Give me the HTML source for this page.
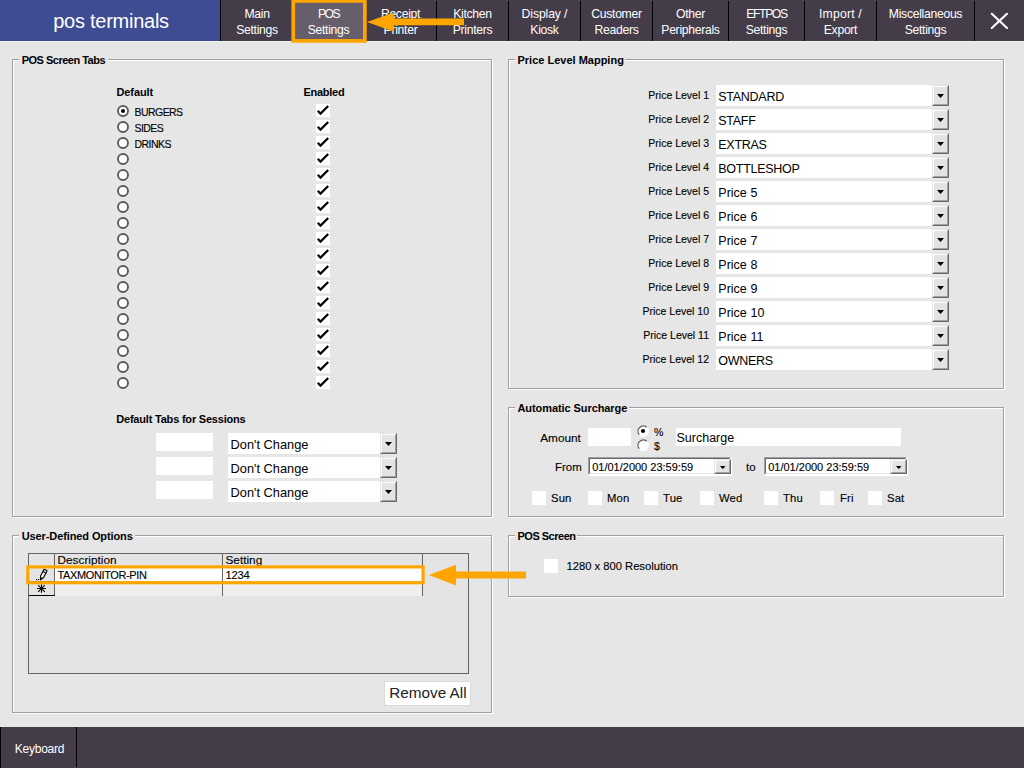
<!DOCTYPE html>
<html><head><meta charset="utf-8"><style>
html,body{margin:0;padding:0;}
body{width:1024px;height:768px;overflow:hidden;position:relative;background:#e6e6e6;font-family:"Liberation Sans", sans-serif;}
body div, body svg{position:absolute;box-sizing:content-box;}
.t{white-space:nowrap;}
.s{-webkit-text-stroke:0.12px currentColor;}
</style></head><body>
<div style="left:0px;top:0px;width:220px;height:41px;background:#3e4c94;"></div><div style="left:220px;top:0px;width:1px;height:41px;background:#000;"></div><div style="left:221px;top:0px;width:803px;height:41px;background:#443c48;"></div><div style="left:292px;top:0px;width:72px;height:41px;background:#675e6b;"></div><div style="left:292px;top:1px;width:1px;height:40px;background:#000;"></div><div style="left:364px;top:1px;width:1px;height:40px;background:#000;"></div><div style="left:436px;top:1px;width:1px;height:40px;background:#000;"></div><div style="left:508px;top:1px;width:1px;height:40px;background:#000;"></div><div style="left:580px;top:1px;width:1px;height:40px;background:#000;"></div><div style="left:652px;top:1px;width:1px;height:40px;background:#000;"></div><div style="left:728px;top:1px;width:1px;height:40px;background:#000;"></div><div style="left:804px;top:1px;width:1px;height:40px;background:#000;"></div><div style="left:876px;top:1px;width:1px;height:40px;background:#000;"></div><div style="left:974px;top:1px;width:1px;height:40px;background:#000;"></div><div style="left:0px;top:41px;width:1024px;height:1px;background:#f2f2f2;"></div><div class="t" style="left:11px;width:200px;text-align:center;top:10.97px;font-size:20px;line-height:20px;color:#fff;font-weight:400;letter-spacing:-0.25px">pos terminals</div><div class="t" style="left:157.0px;width:200px;text-align:center;top:7.97px;font-size:12.2px;line-height:12.2px;color:#fff;font-weight:400;letter-spacing:-0.3px">Main</div><div class="t" style="left:157.0px;width:200px;text-align:center;top:23.97px;font-size:12.2px;line-height:12.2px;color:#fff;font-weight:400;letter-spacing:-0.3px">Settings</div><div class="t" style="left:228.5px;width:200px;text-align:center;top:7.97px;font-size:12.2px;line-height:12.2px;color:#fff;font-weight:400;letter-spacing:-1.5px">POS</div><div class="t" style="left:228.5px;width:200px;text-align:center;top:23.97px;font-size:12.2px;line-height:12.2px;color:#fff;font-weight:400;letter-spacing:-0.3px">Settings</div><div class="t" style="left:300.5px;width:200px;text-align:center;top:7.97px;font-size:12.2px;line-height:12.2px;color:#fff;font-weight:400;letter-spacing:-0.3px">Receipt</div><div class="t" style="left:300.5px;width:200px;text-align:center;top:23.97px;font-size:12.2px;line-height:12.2px;color:#fff;font-weight:400;letter-spacing:-0.3px">Printer</div><div class="t" style="left:372.5px;width:200px;text-align:center;top:7.97px;font-size:12.2px;line-height:12.2px;color:#fff;font-weight:400;letter-spacing:-0.3px">Kitchen</div><div class="t" style="left:372.5px;width:200px;text-align:center;top:23.97px;font-size:12.2px;line-height:12.2px;color:#fff;font-weight:400;letter-spacing:-0.3px">Printers</div><div class="t" style="left:444.5px;width:200px;text-align:center;top:7.97px;font-size:12.2px;line-height:12.2px;color:#fff;font-weight:400;letter-spacing:-0.1px">Display /</div><div class="t" style="left:444.5px;width:200px;text-align:center;top:23.97px;font-size:12.2px;line-height:12.2px;color:#fff;font-weight:400;letter-spacing:-0.3px">Kiosk</div><div class="t" style="left:516.5px;width:200px;text-align:center;top:7.97px;font-size:12.2px;line-height:12.2px;color:#fff;font-weight:400;letter-spacing:-0.3px">Customer</div><div class="t" style="left:516.5px;width:200px;text-align:center;top:23.97px;font-size:12.2px;line-height:12.2px;color:#fff;font-weight:400;letter-spacing:-0.3px">Readers</div><div class="t" style="left:590.5px;width:200px;text-align:center;top:7.97px;font-size:12.2px;line-height:12.2px;color:#fff;font-weight:400;letter-spacing:-0.3px">Other</div><div class="t" style="left:590.5px;width:200px;text-align:center;top:23.97px;font-size:12.2px;line-height:12.2px;color:#fff;font-weight:400;letter-spacing:-0.3px">Peripherals</div><div class="t" style="left:666.5px;width:200px;text-align:center;top:7.97px;font-size:12.2px;line-height:12.2px;color:#fff;font-weight:400;letter-spacing:-1.4px">EFTPOS</div><div class="t" style="left:666.5px;width:200px;text-align:center;top:23.97px;font-size:12.2px;line-height:12.2px;color:#fff;font-weight:400;letter-spacing:-0.3px">Settings</div><div class="t" style="left:740.5px;width:200px;text-align:center;top:7.97px;font-size:12.2px;line-height:12.2px;color:#fff;font-weight:400;letter-spacing:0.2px">Import /</div><div class="t" style="left:740.5px;width:200px;text-align:center;top:23.97px;font-size:12.2px;line-height:12.2px;color:#fff;font-weight:400;letter-spacing:-0.3px">Export</div><div class="t" style="left:825.5px;width:200px;text-align:center;top:7.97px;font-size:12.2px;line-height:12.2px;color:#fff;font-weight:400;letter-spacing:-0.3px">Miscellaneous</div><div class="t" style="left:825.5px;width:200px;text-align:center;top:23.97px;font-size:12.2px;line-height:12.2px;color:#fff;font-weight:400;letter-spacing:-0.3px">Settings</div><svg style="left:989px;top:12px" width="20" height="18" viewBox="0 0 20 18"><path d="M2.8 1.8 L18 16 M18 1.8 L2.8 16" stroke="#fff" stroke-width="2.1" stroke-linecap="round"/></svg><div style="left:13px;top:60px;width:478px;height:456px;border:1px solid #fff"></div><div style="left:12px;top:59px;width:478px;height:456px;border:1px solid #a0a0a0"></div><div style="left:19.099999999999998px;top:53px;width:88.6px;height:12px;background:#e6e6e6;"></div><div class="t" style="left:21.7px;top:55.19px;font-size:11px;line-height:11px;color:#000;font-weight:700;letter-spacing:-0.5px">POS Screen Tabs</div><div class="t" style="left:116.5px;top:87.29px;font-size:11px;line-height:11px;color:#000;font-weight:700;letter-spacing:-0.1px">Default</div><div class="t" style="left:303.4px;top:87.49px;font-size:11px;line-height:11px;color:#000;font-weight:700;letter-spacing:-0.25px">Enabled</div><svg style="left:117px;top:105px" width="12" height="12" viewBox="0 0 12 12"><circle cx="6.0" cy="6.0" r="5.0" fill="#fff" stroke="#5c5c5c" stroke-width="1.9"/><circle cx="6.0" cy="6.0" r="2" fill="#000"/></svg><div class="t s" style="left:134.5px;top:107.01px;font-size:10.5px;line-height:10.5px;color:#000;font-weight:400;letter-spacing:-0.55px">BURGERS</div><div style="left:316px;top:104px;width:14px;height:13px;background:#fff;"></div><svg style="left:316px;top:104px" width="14" height="14" viewBox="0 0 14 14"><path d="M1.7 6.7 L4.5 9.6 L12.2 2.0" fill="none" stroke="#000" stroke-width="2.2" stroke-linecap="butt" stroke-linejoin="miter"/></svg><svg style="left:117px;top:121px" width="12" height="12" viewBox="0 0 12 12"><circle cx="6.0" cy="6.0" r="5.0" fill="#fff" stroke="#5c5c5c" stroke-width="1.9"/></svg><div class="t s" style="left:134.5px;top:123.01px;font-size:10.5px;line-height:10.5px;color:#000;font-weight:400;letter-spacing:-0.55px">SIDES</div><div style="left:316px;top:120px;width:14px;height:13px;background:#fff;"></div><svg style="left:316px;top:120px" width="14" height="14" viewBox="0 0 14 14"><path d="M1.7 6.7 L4.5 9.6 L12.2 2.0" fill="none" stroke="#000" stroke-width="2.2" stroke-linecap="butt" stroke-linejoin="miter"/></svg><svg style="left:117px;top:137px" width="12" height="12" viewBox="0 0 12 12"><circle cx="6.0" cy="6.0" r="5.0" fill="#fff" stroke="#5c5c5c" stroke-width="1.9"/></svg><div class="t s" style="left:134.5px;top:139.01px;font-size:10.5px;line-height:10.5px;color:#000;font-weight:400;letter-spacing:-0.55px">DRINKS</div><div style="left:316px;top:136px;width:14px;height:13px;background:#fff;"></div><svg style="left:316px;top:136px" width="14" height="14" viewBox="0 0 14 14"><path d="M1.7 6.7 L4.5 9.6 L12.2 2.0" fill="none" stroke="#000" stroke-width="2.2" stroke-linecap="butt" stroke-linejoin="miter"/></svg><svg style="left:117px;top:153px" width="12" height="12" viewBox="0 0 12 12"><circle cx="6.0" cy="6.0" r="5.0" fill="#fff" stroke="#5c5c5c" stroke-width="1.9"/></svg><div style="left:316px;top:152px;width:14px;height:13px;background:#fff;"></div><svg style="left:316px;top:152px" width="14" height="14" viewBox="0 0 14 14"><path d="M1.7 6.7 L4.5 9.6 L12.2 2.0" fill="none" stroke="#000" stroke-width="2.2" stroke-linecap="butt" stroke-linejoin="miter"/></svg><svg style="left:117px;top:169px" width="12" height="12" viewBox="0 0 12 12"><circle cx="6.0" cy="6.0" r="5.0" fill="#fff" stroke="#5c5c5c" stroke-width="1.9"/></svg><div style="left:316px;top:168px;width:14px;height:13px;background:#fff;"></div><svg style="left:316px;top:168px" width="14" height="14" viewBox="0 0 14 14"><path d="M1.7 6.7 L4.5 9.6 L12.2 2.0" fill="none" stroke="#000" stroke-width="2.2" stroke-linecap="butt" stroke-linejoin="miter"/></svg><svg style="left:117px;top:185px" width="12" height="12" viewBox="0 0 12 12"><circle cx="6.0" cy="6.0" r="5.0" fill="#fff" stroke="#5c5c5c" stroke-width="1.9"/></svg><div style="left:316px;top:184px;width:14px;height:13px;background:#fff;"></div><svg style="left:316px;top:184px" width="14" height="14" viewBox="0 0 14 14"><path d="M1.7 6.7 L4.5 9.6 L12.2 2.0" fill="none" stroke="#000" stroke-width="2.2" stroke-linecap="butt" stroke-linejoin="miter"/></svg><svg style="left:117px;top:201px" width="12" height="12" viewBox="0 0 12 12"><circle cx="6.0" cy="6.0" r="5.0" fill="#fff" stroke="#5c5c5c" stroke-width="1.9"/></svg><div style="left:316px;top:200px;width:14px;height:13px;background:#fff;"></div><svg style="left:316px;top:200px" width="14" height="14" viewBox="0 0 14 14"><path d="M1.7 6.7 L4.5 9.6 L12.2 2.0" fill="none" stroke="#000" stroke-width="2.2" stroke-linecap="butt" stroke-linejoin="miter"/></svg><svg style="left:117px;top:217px" width="12" height="12" viewBox="0 0 12 12"><circle cx="6.0" cy="6.0" r="5.0" fill="#fff" stroke="#5c5c5c" stroke-width="1.9"/></svg><div style="left:316px;top:216px;width:14px;height:13px;background:#fff;"></div><svg style="left:316px;top:216px" width="14" height="14" viewBox="0 0 14 14"><path d="M1.7 6.7 L4.5 9.6 L12.2 2.0" fill="none" stroke="#000" stroke-width="2.2" stroke-linecap="butt" stroke-linejoin="miter"/></svg><svg style="left:117px;top:233px" width="12" height="12" viewBox="0 0 12 12"><circle cx="6.0" cy="6.0" r="5.0" fill="#fff" stroke="#5c5c5c" stroke-width="1.9"/></svg><div style="left:316px;top:232px;width:14px;height:13px;background:#fff;"></div><svg style="left:316px;top:232px" width="14" height="14" viewBox="0 0 14 14"><path d="M1.7 6.7 L4.5 9.6 L12.2 2.0" fill="none" stroke="#000" stroke-width="2.2" stroke-linecap="butt" stroke-linejoin="miter"/></svg><svg style="left:117px;top:249px" width="12" height="12" viewBox="0 0 12 12"><circle cx="6.0" cy="6.0" r="5.0" fill="#fff" stroke="#5c5c5c" stroke-width="1.9"/></svg><div style="left:316px;top:248px;width:14px;height:13px;background:#fff;"></div><svg style="left:316px;top:248px" width="14" height="14" viewBox="0 0 14 14"><path d="M1.7 6.7 L4.5 9.6 L12.2 2.0" fill="none" stroke="#000" stroke-width="2.2" stroke-linecap="butt" stroke-linejoin="miter"/></svg><svg style="left:117px;top:265px" width="12" height="12" viewBox="0 0 12 12"><circle cx="6.0" cy="6.0" r="5.0" fill="#fff" stroke="#5c5c5c" stroke-width="1.9"/></svg><div style="left:316px;top:264px;width:14px;height:13px;background:#fff;"></div><svg style="left:316px;top:264px" width="14" height="14" viewBox="0 0 14 14"><path d="M1.7 6.7 L4.5 9.6 L12.2 2.0" fill="none" stroke="#000" stroke-width="2.2" stroke-linecap="butt" stroke-linejoin="miter"/></svg><svg style="left:117px;top:281px" width="12" height="12" viewBox="0 0 12 12"><circle cx="6.0" cy="6.0" r="5.0" fill="#fff" stroke="#5c5c5c" stroke-width="1.9"/></svg><div style="left:316px;top:280px;width:14px;height:13px;background:#fff;"></div><svg style="left:316px;top:280px" width="14" height="14" viewBox="0 0 14 14"><path d="M1.7 6.7 L4.5 9.6 L12.2 2.0" fill="none" stroke="#000" stroke-width="2.2" stroke-linecap="butt" stroke-linejoin="miter"/></svg><svg style="left:117px;top:297px" width="12" height="12" viewBox="0 0 12 12"><circle cx="6.0" cy="6.0" r="5.0" fill="#fff" stroke="#5c5c5c" stroke-width="1.9"/></svg><div style="left:316px;top:296px;width:14px;height:13px;background:#fff;"></div><svg style="left:316px;top:296px" width="14" height="14" viewBox="0 0 14 14"><path d="M1.7 6.7 L4.5 9.6 L12.2 2.0" fill="none" stroke="#000" stroke-width="2.2" stroke-linecap="butt" stroke-linejoin="miter"/></svg><svg style="left:117px;top:313px" width="12" height="12" viewBox="0 0 12 12"><circle cx="6.0" cy="6.0" r="5.0" fill="#fff" stroke="#5c5c5c" stroke-width="1.9"/></svg><div style="left:316px;top:312px;width:14px;height:13px;background:#fff;"></div><svg style="left:316px;top:312px" width="14" height="14" viewBox="0 0 14 14"><path d="M1.7 6.7 L4.5 9.6 L12.2 2.0" fill="none" stroke="#000" stroke-width="2.2" stroke-linecap="butt" stroke-linejoin="miter"/></svg><svg style="left:117px;top:329px" width="12" height="12" viewBox="0 0 12 12"><circle cx="6.0" cy="6.0" r="5.0" fill="#fff" stroke="#5c5c5c" stroke-width="1.9"/></svg><div style="left:316px;top:328px;width:14px;height:13px;background:#fff;"></div><svg style="left:316px;top:328px" width="14" height="14" viewBox="0 0 14 14"><path d="M1.7 6.7 L4.5 9.6 L12.2 2.0" fill="none" stroke="#000" stroke-width="2.2" stroke-linecap="butt" stroke-linejoin="miter"/></svg><svg style="left:117px;top:345px" width="12" height="12" viewBox="0 0 12 12"><circle cx="6.0" cy="6.0" r="5.0" fill="#fff" stroke="#5c5c5c" stroke-width="1.9"/></svg><div style="left:316px;top:344px;width:14px;height:13px;background:#fff;"></div><svg style="left:316px;top:344px" width="14" height="14" viewBox="0 0 14 14"><path d="M1.7 6.7 L4.5 9.6 L12.2 2.0" fill="none" stroke="#000" stroke-width="2.2" stroke-linecap="butt" stroke-linejoin="miter"/></svg><svg style="left:117px;top:361px" width="12" height="12" viewBox="0 0 12 12"><circle cx="6.0" cy="6.0" r="5.0" fill="#fff" stroke="#5c5c5c" stroke-width="1.9"/></svg><div style="left:316px;top:360px;width:14px;height:13px;background:#fff;"></div><svg style="left:316px;top:360px" width="14" height="14" viewBox="0 0 14 14"><path d="M1.7 6.7 L4.5 9.6 L12.2 2.0" fill="none" stroke="#000" stroke-width="2.2" stroke-linecap="butt" stroke-linejoin="miter"/></svg><svg style="left:117px;top:377px" width="12" height="12" viewBox="0 0 12 12"><circle cx="6.0" cy="6.0" r="5.0" fill="#fff" stroke="#5c5c5c" stroke-width="1.9"/></svg><div style="left:316px;top:376px;width:14px;height:13px;background:#fff;"></div><svg style="left:316px;top:376px" width="14" height="14" viewBox="0 0 14 14"><path d="M1.7 6.7 L4.5 9.6 L12.2 2.0" fill="none" stroke="#000" stroke-width="2.2" stroke-linecap="butt" stroke-linejoin="miter"/></svg><div class="t" style="left:116.25px;top:414.09px;font-size:11px;line-height:11px;color:#000;font-weight:700;letter-spacing:-0.2px">Default Tabs for Sessions</div><div style="left:156px;top:433px;width:57px;height:18px;background:#fff;"></div><div style="left:228px;top:433px;width:152px;height:21px;background:#fff;"></div><div style="left:380px;top:433px;width:15px;height:19px;background:#e3e3e3;border-left:1px solid #e3e3e3;border-top:1px solid #e3e3e3;border-right:1px solid #696969;border-bottom:1px solid #696969"></div><div style="left:381px;top:434px;width:13px;height:17px;border-left:1px solid #fff;border-top:1px solid #fff;border-right:1px solid #a0a0a0;border-bottom:1px solid #a0a0a0"></div><svg style="left:384.5px;top:441.5px" width="7" height="4" viewBox="0 0 7 4"><path d="M0 0 H7 L3.5 4 Z" fill="#000"/></svg><div class="t" style="left:230.6px;top:438.96px;font-size:12.8px;line-height:12.8px;color:#000;font-weight:400;letter-spacing:0px;word-spacing:0px">Don&#39;t Change</div><div style="left:156px;top:457px;width:57px;height:18px;background:#fff;"></div><div style="left:228px;top:457px;width:152px;height:21px;background:#fff;"></div><div style="left:380px;top:457px;width:15px;height:19px;background:#e3e3e3;border-left:1px solid #e3e3e3;border-top:1px solid #e3e3e3;border-right:1px solid #696969;border-bottom:1px solid #696969"></div><div style="left:381px;top:458px;width:13px;height:17px;border-left:1px solid #fff;border-top:1px solid #fff;border-right:1px solid #a0a0a0;border-bottom:1px solid #a0a0a0"></div><svg style="left:384.5px;top:465.5px" width="7" height="4" viewBox="0 0 7 4"><path d="M0 0 H7 L3.5 4 Z" fill="#000"/></svg><div class="t" style="left:230.6px;top:462.96px;font-size:12.8px;line-height:12.8px;color:#000;font-weight:400;letter-spacing:0px;word-spacing:0px">Don&#39;t Change</div><div style="left:156px;top:481px;width:57px;height:18px;background:#fff;"></div><div style="left:228px;top:481px;width:152px;height:21px;background:#fff;"></div><div style="left:380px;top:481px;width:15px;height:19px;background:#e3e3e3;border-left:1px solid #e3e3e3;border-top:1px solid #e3e3e3;border-right:1px solid #696969;border-bottom:1px solid #696969"></div><div style="left:381px;top:482px;width:13px;height:17px;border-left:1px solid #fff;border-top:1px solid #fff;border-right:1px solid #a0a0a0;border-bottom:1px solid #a0a0a0"></div><svg style="left:384.5px;top:489.5px" width="7" height="4" viewBox="0 0 7 4"><path d="M0 0 H7 L3.5 4 Z" fill="#000"/></svg><div class="t" style="left:230.6px;top:486.96px;font-size:12.8px;line-height:12.8px;color:#000;font-weight:400;letter-spacing:0px;word-spacing:0px">Don&#39;t Change</div><div style="left:509px;top:60px;width:494px;height:328px;border:1px solid #fff"></div><div style="left:508px;top:59px;width:494px;height:328px;border:1px solid #a0a0a0"></div><div style="left:514.9px;top:53px;width:110.6px;height:12px;background:#e6e6e6;"></div><div class="t" style="left:517.5px;top:55.19px;font-size:11px;line-height:11px;color:#000;font-weight:700;letter-spacing:0px">Price Level Mapping</div><div class="t s" style="right:315px;top:90.21px;font-size:10.5px;line-height:10.5px;color:#000;font-weight:400;text-align:right;letter-spacing:0px">Price Level 1</div><div style="left:716px;top:85px;width:216px;height:21px;background:#fff;"></div><div style="left:932px;top:85px;width:15px;height:19px;background:#e3e3e3;border-left:1px solid #e3e3e3;border-top:1px solid #e3e3e3;border-right:1px solid #696969;border-bottom:1px solid #696969"></div><div style="left:933px;top:86px;width:13px;height:17px;border-left:1px solid #fff;border-top:1px solid #fff;border-right:1px solid #a0a0a0;border-bottom:1px solid #a0a0a0"></div><svg style="left:936.5px;top:93.5px" width="7" height="4" viewBox="0 0 7 4"><path d="M0 0 H7 L3.5 4 Z" fill="#000"/></svg><div class="t" style="left:718.3px;top:91.02px;font-size:12.5px;line-height:12.5px;color:#000;font-weight:400;letter-spacing:-0.28px;word-spacing:0px">STANDARD</div><div class="t s" style="right:315px;top:114.21px;font-size:10.5px;line-height:10.5px;color:#000;font-weight:400;text-align:right;letter-spacing:0px">Price Level 2</div><div style="left:716px;top:109px;width:216px;height:21px;background:#fff;"></div><div style="left:932px;top:109px;width:15px;height:19px;background:#e3e3e3;border-left:1px solid #e3e3e3;border-top:1px solid #e3e3e3;border-right:1px solid #696969;border-bottom:1px solid #696969"></div><div style="left:933px;top:110px;width:13px;height:17px;border-left:1px solid #fff;border-top:1px solid #fff;border-right:1px solid #a0a0a0;border-bottom:1px solid #a0a0a0"></div><svg style="left:936.5px;top:117.5px" width="7" height="4" viewBox="0 0 7 4"><path d="M0 0 H7 L3.5 4 Z" fill="#000"/></svg><div class="t" style="left:718.3px;top:115.02px;font-size:12.5px;line-height:12.5px;color:#000;font-weight:400;letter-spacing:-0.28px;word-spacing:0px">STAFF</div><div class="t s" style="right:315px;top:138.21px;font-size:10.5px;line-height:10.5px;color:#000;font-weight:400;text-align:right;letter-spacing:0px">Price Level 3</div><div style="left:716px;top:133px;width:216px;height:21px;background:#fff;"></div><div style="left:932px;top:133px;width:15px;height:19px;background:#e3e3e3;border-left:1px solid #e3e3e3;border-top:1px solid #e3e3e3;border-right:1px solid #696969;border-bottom:1px solid #696969"></div><div style="left:933px;top:134px;width:13px;height:17px;border-left:1px solid #fff;border-top:1px solid #fff;border-right:1px solid #a0a0a0;border-bottom:1px solid #a0a0a0"></div><svg style="left:936.5px;top:141.5px" width="7" height="4" viewBox="0 0 7 4"><path d="M0 0 H7 L3.5 4 Z" fill="#000"/></svg><div class="t" style="left:718.3px;top:139.02px;font-size:12.5px;line-height:12.5px;color:#000;font-weight:400;letter-spacing:-0.28px;word-spacing:0px">EXTRAS</div><div class="t s" style="right:315px;top:162.21px;font-size:10.5px;line-height:10.5px;color:#000;font-weight:400;text-align:right;letter-spacing:0px">Price Level 4</div><div style="left:716px;top:157px;width:216px;height:21px;background:#fff;"></div><div style="left:932px;top:157px;width:15px;height:19px;background:#e3e3e3;border-left:1px solid #e3e3e3;border-top:1px solid #e3e3e3;border-right:1px solid #696969;border-bottom:1px solid #696969"></div><div style="left:933px;top:158px;width:13px;height:17px;border-left:1px solid #fff;border-top:1px solid #fff;border-right:1px solid #a0a0a0;border-bottom:1px solid #a0a0a0"></div><svg style="left:936.5px;top:165.5px" width="7" height="4" viewBox="0 0 7 4"><path d="M0 0 H7 L3.5 4 Z" fill="#000"/></svg><div class="t" style="left:718.3px;top:163.02px;font-size:12.5px;line-height:12.5px;color:#000;font-weight:400;letter-spacing:-0.28px;word-spacing:0px">BOTTLESHOP</div><div class="t s" style="right:315px;top:186.21px;font-size:10.5px;line-height:10.5px;color:#000;font-weight:400;text-align:right;letter-spacing:0px">Price Level 5</div><div style="left:716px;top:181px;width:216px;height:21px;background:#fff;"></div><div style="left:932px;top:181px;width:15px;height:19px;background:#e3e3e3;border-left:1px solid #e3e3e3;border-top:1px solid #e3e3e3;border-right:1px solid #696969;border-bottom:1px solid #696969"></div><div style="left:933px;top:182px;width:13px;height:17px;border-left:1px solid #fff;border-top:1px solid #fff;border-right:1px solid #a0a0a0;border-bottom:1px solid #a0a0a0"></div><svg style="left:936.5px;top:189.5px" width="7" height="4" viewBox="0 0 7 4"><path d="M0 0 H7 L3.5 4 Z" fill="#000"/></svg><div class="t" style="left:718.3px;top:187.02px;font-size:12.5px;line-height:12.5px;color:#000;font-weight:400;letter-spacing:0px;word-spacing:0.2px">Price 5</div><div class="t s" style="right:315px;top:210.21px;font-size:10.5px;line-height:10.5px;color:#000;font-weight:400;text-align:right;letter-spacing:0px">Price Level 6</div><div style="left:716px;top:205px;width:216px;height:21px;background:#fff;"></div><div style="left:932px;top:205px;width:15px;height:19px;background:#e3e3e3;border-left:1px solid #e3e3e3;border-top:1px solid #e3e3e3;border-right:1px solid #696969;border-bottom:1px solid #696969"></div><div style="left:933px;top:206px;width:13px;height:17px;border-left:1px solid #fff;border-top:1px solid #fff;border-right:1px solid #a0a0a0;border-bottom:1px solid #a0a0a0"></div><svg style="left:936.5px;top:213.5px" width="7" height="4" viewBox="0 0 7 4"><path d="M0 0 H7 L3.5 4 Z" fill="#000"/></svg><div class="t" style="left:718.3px;top:211.02px;font-size:12.5px;line-height:12.5px;color:#000;font-weight:400;letter-spacing:0px;word-spacing:0.2px">Price 6</div><div class="t s" style="right:315px;top:234.21px;font-size:10.5px;line-height:10.5px;color:#000;font-weight:400;text-align:right;letter-spacing:0px">Price Level 7</div><div style="left:716px;top:229px;width:216px;height:21px;background:#fff;"></div><div style="left:932px;top:229px;width:15px;height:19px;background:#e3e3e3;border-left:1px solid #e3e3e3;border-top:1px solid #e3e3e3;border-right:1px solid #696969;border-bottom:1px solid #696969"></div><div style="left:933px;top:230px;width:13px;height:17px;border-left:1px solid #fff;border-top:1px solid #fff;border-right:1px solid #a0a0a0;border-bottom:1px solid #a0a0a0"></div><svg style="left:936.5px;top:237.5px" width="7" height="4" viewBox="0 0 7 4"><path d="M0 0 H7 L3.5 4 Z" fill="#000"/></svg><div class="t" style="left:718.3px;top:235.02px;font-size:12.5px;line-height:12.5px;color:#000;font-weight:400;letter-spacing:0px;word-spacing:0.2px">Price 7</div><div class="t s" style="right:315px;top:258.21px;font-size:10.5px;line-height:10.5px;color:#000;font-weight:400;text-align:right;letter-spacing:0px">Price Level 8</div><div style="left:716px;top:253px;width:216px;height:21px;background:#fff;"></div><div style="left:932px;top:253px;width:15px;height:19px;background:#e3e3e3;border-left:1px solid #e3e3e3;border-top:1px solid #e3e3e3;border-right:1px solid #696969;border-bottom:1px solid #696969"></div><div style="left:933px;top:254px;width:13px;height:17px;border-left:1px solid #fff;border-top:1px solid #fff;border-right:1px solid #a0a0a0;border-bottom:1px solid #a0a0a0"></div><svg style="left:936.5px;top:261.5px" width="7" height="4" viewBox="0 0 7 4"><path d="M0 0 H7 L3.5 4 Z" fill="#000"/></svg><div class="t" style="left:718.3px;top:259.02px;font-size:12.5px;line-height:12.5px;color:#000;font-weight:400;letter-spacing:0px;word-spacing:0.2px">Price 8</div><div class="t s" style="right:315px;top:282.21px;font-size:10.5px;line-height:10.5px;color:#000;font-weight:400;text-align:right;letter-spacing:0px">Price Level 9</div><div style="left:716px;top:277px;width:216px;height:21px;background:#fff;"></div><div style="left:932px;top:277px;width:15px;height:19px;background:#e3e3e3;border-left:1px solid #e3e3e3;border-top:1px solid #e3e3e3;border-right:1px solid #696969;border-bottom:1px solid #696969"></div><div style="left:933px;top:278px;width:13px;height:17px;border-left:1px solid #fff;border-top:1px solid #fff;border-right:1px solid #a0a0a0;border-bottom:1px solid #a0a0a0"></div><svg style="left:936.5px;top:285.5px" width="7" height="4" viewBox="0 0 7 4"><path d="M0 0 H7 L3.5 4 Z" fill="#000"/></svg><div class="t" style="left:718.3px;top:283.02px;font-size:12.5px;line-height:12.5px;color:#000;font-weight:400;letter-spacing:0px;word-spacing:0.2px">Price 9</div><div class="t s" style="right:315px;top:306.21px;font-size:10.5px;line-height:10.5px;color:#000;font-weight:400;text-align:right;letter-spacing:0px">Price Level 10</div><div style="left:716px;top:301px;width:216px;height:21px;background:#fff;"></div><div style="left:932px;top:301px;width:15px;height:19px;background:#e3e3e3;border-left:1px solid #e3e3e3;border-top:1px solid #e3e3e3;border-right:1px solid #696969;border-bottom:1px solid #696969"></div><div style="left:933px;top:302px;width:13px;height:17px;border-left:1px solid #fff;border-top:1px solid #fff;border-right:1px solid #a0a0a0;border-bottom:1px solid #a0a0a0"></div><svg style="left:936.5px;top:309.5px" width="7" height="4" viewBox="0 0 7 4"><path d="M0 0 H7 L3.5 4 Z" fill="#000"/></svg><div class="t" style="left:718.3px;top:307.02px;font-size:12.5px;line-height:12.5px;color:#000;font-weight:400;letter-spacing:0px;word-spacing:0.2px">Price 10</div><div class="t s" style="right:315px;top:330.21px;font-size:10.5px;line-height:10.5px;color:#000;font-weight:400;text-align:right;letter-spacing:0px">Price Level 11</div><div style="left:716px;top:325px;width:216px;height:21px;background:#fff;"></div><div style="left:932px;top:325px;width:15px;height:19px;background:#e3e3e3;border-left:1px solid #e3e3e3;border-top:1px solid #e3e3e3;border-right:1px solid #696969;border-bottom:1px solid #696969"></div><div style="left:933px;top:326px;width:13px;height:17px;border-left:1px solid #fff;border-top:1px solid #fff;border-right:1px solid #a0a0a0;border-bottom:1px solid #a0a0a0"></div><svg style="left:936.5px;top:333.5px" width="7" height="4" viewBox="0 0 7 4"><path d="M0 0 H7 L3.5 4 Z" fill="#000"/></svg><div class="t" style="left:718.3px;top:331.02px;font-size:12.5px;line-height:12.5px;color:#000;font-weight:400;letter-spacing:0px;word-spacing:0.2px">Price 11</div><div class="t s" style="right:315px;top:354.21px;font-size:10.5px;line-height:10.5px;color:#000;font-weight:400;text-align:right;letter-spacing:0px">Price Level 12</div><div style="left:716px;top:349px;width:216px;height:21px;background:#fff;"></div><div style="left:932px;top:349px;width:15px;height:19px;background:#e3e3e3;border-left:1px solid #e3e3e3;border-top:1px solid #e3e3e3;border-right:1px solid #696969;border-bottom:1px solid #696969"></div><div style="left:933px;top:350px;width:13px;height:17px;border-left:1px solid #fff;border-top:1px solid #fff;border-right:1px solid #a0a0a0;border-bottom:1px solid #a0a0a0"></div><svg style="left:936.5px;top:357.5px" width="7" height="4" viewBox="0 0 7 4"><path d="M0 0 H7 L3.5 4 Z" fill="#000"/></svg><div class="t" style="left:718.3px;top:355.02px;font-size:12.5px;line-height:12.5px;color:#000;font-weight:400;letter-spacing:-0.28px;word-spacing:0px">OWNERS</div><div style="left:509px;top:408px;width:494px;height:108px;border:1px solid #fff"></div><div style="left:508px;top:407px;width:494px;height:108px;border:1px solid #a0a0a0"></div><div style="left:514.9px;top:401px;width:114.19999999999999px;height:12px;background:#e6e6e6;"></div><div class="t" style="left:517.5px;top:403.19px;font-size:11px;line-height:11px;color:#000;font-weight:700;letter-spacing:-0.08px">Automatic Surcharge</div><div class="t s" style="left:540.2px;top:432.81px;font-size:11.8px;line-height:11.8px;color:#000;font-weight:400;letter-spacing:0px">Amount</div><div style="left:588px;top:428px;width:43px;height:18px;background:#fff;"></div><svg style="left:637px;top:425px" width="12" height="12" viewBox="0 0 12 12"><circle cx="6" cy="6" r="5.4" fill="#fff" stroke="#fff" stroke-width="1.2"/><path d="M2.2 9.8 A5.4 5.4 0 0 1 9.8 2.2" fill="none" stroke="#666" stroke-width="1.4"/><circle cx="6" cy="6" r="2.1" fill="#000"/></svg><svg style="left:637px;top:439px" width="12" height="12" viewBox="0 0 12 12"><circle cx="6" cy="6" r="5.4" fill="#fff" stroke="#fff" stroke-width="1.2"/><path d="M2.2 9.8 A5.4 5.4 0 0 1 9.8 2.2" fill="none" stroke="#666" stroke-width="1.4"/></svg><div class="t s" style="left:654px;top:426.71px;font-size:10.5px;line-height:10.5px;color:#000;font-weight:400;">%</div><div class="t s" style="left:654px;top:440.71px;font-size:10.5px;line-height:10.5px;color:#000;font-weight:400;">$</div><div style="left:676px;top:428px;width:225px;height:18px;background:#fff;"></div><div class="t" style="left:676.5px;top:432.32px;font-size:12.5px;line-height:12.5px;color:#000;font-weight:400;letter-spacing:0px">Surcharge</div><div class="t s" style="left:555px;top:462.07px;font-size:11.5px;line-height:11.5px;color:#000;font-weight:400;letter-spacing:0px">From</div><div class="t s" style="left:746px;top:462.07px;font-size:11.5px;line-height:11.5px;color:#000;font-weight:400;">to</div><div style="left:588px;top:457px;width:144px;height:19px;background:#fff;"></div><div style="left:588px;top:457px;width:143px;height:18px;border-left:1px solid #a0a0a0;border-top:1px solid #a0a0a0;border-right:1px solid #fff;border-bottom:1px solid #fff;box-sizing:border-box"></div><div style="left:589px;top:458px;width:141px;height:16px;border-left:1px solid #696969;border-top:1px solid #696969;border-right:1px solid #e3e3e3;border-bottom:1px solid #e3e3e3;box-sizing:border-box"></div><div style="left:714px;top:459px;width:15px;height:13px;background:#e3e3e3;border-left:1px solid #e3e3e3;border-top:1px solid #e3e3e3;border-right:1px solid #696969;border-bottom:1px solid #696969"></div><div style="left:715px;top:460px;width:13px;height:11px;border-left:1px solid #fff;border-top:1px solid #fff;border-right:1px solid #a0a0a0;border-bottom:1px solid #a0a0a0"></div><svg style="left:720.0px;top:465.7px" width="5.5" height="3.2" viewBox="0 0 5.5 3.2"><path d="M0 0 H5.5 L2.75 3.2 Z" fill="#000"/></svg><div class="t s" style="left:592.2px;top:462.29px;font-size:11px;line-height:11px;color:#000;font-weight:400;letter-spacing:0px">01/01/2000 23:59:59</div><div style="left:764px;top:457px;width:144px;height:19px;background:#fff;"></div><div style="left:764px;top:457px;width:143px;height:18px;border-left:1px solid #a0a0a0;border-top:1px solid #a0a0a0;border-right:1px solid #fff;border-bottom:1px solid #fff;box-sizing:border-box"></div><div style="left:765px;top:458px;width:141px;height:16px;border-left:1px solid #696969;border-top:1px solid #696969;border-right:1px solid #e3e3e3;border-bottom:1px solid #e3e3e3;box-sizing:border-box"></div><div style="left:890px;top:459px;width:15px;height:13px;background:#e3e3e3;border-left:1px solid #e3e3e3;border-top:1px solid #e3e3e3;border-right:1px solid #696969;border-bottom:1px solid #696969"></div><div style="left:891px;top:460px;width:13px;height:11px;border-left:1px solid #fff;border-top:1px solid #fff;border-right:1px solid #a0a0a0;border-bottom:1px solid #a0a0a0"></div><svg style="left:896.0px;top:465.7px" width="5.5" height="3.2" viewBox="0 0 5.5 3.2"><path d="M0 0 H5.5 L2.75 3.2 Z" fill="#000"/></svg><div class="t s" style="left:768.2px;top:462.29px;font-size:11px;line-height:11px;color:#000;font-weight:400;letter-spacing:0px">01/01/2000 23:59:59</div><div style="left:532px;top:491px;width:14px;height:14px;background:#fff;"></div><div class="t s" style="left:551px;top:492.73px;font-size:11.3px;line-height:11.3px;color:#000;font-weight:400;letter-spacing:0.15px">Sun</div><div style="left:588px;top:491px;width:14px;height:14px;background:#fff;"></div><div class="t s" style="left:607px;top:492.73px;font-size:11.3px;line-height:11.3px;color:#000;font-weight:400;letter-spacing:0.15px">Mon</div><div style="left:644px;top:491px;width:14px;height:14px;background:#fff;"></div><div class="t s" style="left:663px;top:492.73px;font-size:11.3px;line-height:11.3px;color:#000;font-weight:400;letter-spacing:0.15px">Tue</div><div style="left:700px;top:491px;width:14px;height:14px;background:#fff;"></div><div class="t s" style="left:719px;top:492.73px;font-size:11.3px;line-height:11.3px;color:#000;font-weight:400;letter-spacing:0.15px">Wed</div><div style="left:764px;top:491px;width:14px;height:14px;background:#fff;"></div><div class="t s" style="left:783px;top:492.73px;font-size:11.3px;line-height:11.3px;color:#000;font-weight:400;letter-spacing:0.15px">Thu</div><div style="left:820px;top:491px;width:14px;height:14px;background:#fff;"></div><div class="t s" style="left:840px;top:492.73px;font-size:11.3px;line-height:11.3px;color:#000;font-weight:400;letter-spacing:0.15px">Fri</div><div style="left:868px;top:491px;width:14px;height:14px;background:#fff;"></div><div class="t s" style="left:887px;top:492.73px;font-size:11.3px;line-height:11.3px;color:#000;font-weight:400;letter-spacing:0.15px">Sat</div><div style="left:509px;top:536px;width:494px;height:60px;border:1px solid #fff"></div><div style="left:508px;top:535px;width:494px;height:60px;border:1px solid #a0a0a0"></div><div style="left:514.9px;top:529px;width:62.6px;height:12px;background:#e6e6e6;"></div><div class="t" style="left:517.5px;top:531.19px;font-size:11px;line-height:11px;color:#000;font-weight:700;letter-spacing:-0.5px">POS Screen</div><div style="left:544px;top:559px;width:14px;height:14px;background:#fff;"></div><div class="t s" style="left:566.6px;top:560.92px;font-size:11.2px;line-height:11.2px;color:#000;font-weight:400;letter-spacing:0px">1280 x 800 Resolution</div><div style="left:13px;top:536px;width:478px;height:176px;border:1px solid #fff"></div><div style="left:12px;top:535px;width:478px;height:176px;border:1px solid #a0a0a0"></div><div style="left:19.099999999999998px;top:529px;width:115.6px;height:12px;background:#e6e6e6;"></div><div class="t" style="left:21.7px;top:531.19px;font-size:11px;line-height:11px;color:#000;font-weight:700;letter-spacing:-0.1px">User-Defined Options</div><div style="left:28px;top:553px;width:441px;height:121px;background:#646464;"></div><div style="left:29px;top:554px;width:439px;height:119px;background:#e4e4e4;"></div><div style="left:55px;top:566px;width:367px;height:15px;background:#fff;"></div><div style="left:55px;top:582px;width:367px;height:14px;background:#efefef;"></div><div style="left:54px;top:554px;width:1px;height:42px;background:#646464;"></div><div style="left:222px;top:554px;width:1px;height:42px;background:#646464;"></div><div style="left:422px;top:554px;width:1px;height:42px;background:#646464;"></div><div style="left:29px;top:581px;width:26px;height:1px;background:#000;"></div><div style="left:29px;top:595px;width:26px;height:1px;background:#000;"></div><div class="t s" style="left:57.5px;top:555.41px;font-size:11.8px;line-height:11.8px;color:#000;font-weight:400;letter-spacing:0px">Description</div><div class="t s" style="left:225.5px;top:555.41px;font-size:11.8px;line-height:11.8px;color:#000;font-weight:400;letter-spacing:0px">Setting</div><div class="t s" style="left:57.5px;top:569.69px;font-size:11px;line-height:11px;color:#000;font-weight:400;letter-spacing:-0.38px">TAXMONITOR-PIN</div><div class="t s" style="left:225.5px;top:569.52px;font-size:11.2px;line-height:11.2px;color:#000;font-weight:400;letter-spacing:-0.2px">1234</div><svg style="left:34px;top:567px" width="16" height="16" viewBox="0 0 16 16"><path d="M6.5 12.8 L6.59 8.91 L10.02 2.24 L13.04 3.80 L9.61 10.47 Z" fill="#fff" stroke="#000" stroke-width="1.15" stroke-linejoin="round"/><path d="M9.0 4.6 L11.9 6.1" stroke="#000" stroke-width="1.1"/><path d="M6.5 12.8 L6.8 10.2 L8.6 11.1 Z" fill="#000"/><rect x="2" y="12" width="1.1" height="1.1" fill="#000"/><rect x="4" y="12" width="1.1" height="1.1" fill="#000"/></svg><svg style="left:36px;top:583px" width="11" height="11" viewBox="0 0 11 11"><path d="M5.5 1.2 V9.7 M1.1 5.5 H10 M2.2 2.2 L8.8 8.8 M8.8 2.2 L2.2 8.8" stroke="#000" stroke-width="1.05"/><circle cx="5.5" cy="5.5" r="1.5" fill="#000"/></svg><svg style="left:0px;top:0px" width="1024" height="768"><rect x="27.8" y="566.9" width="395.3" height="15.8" fill="none" stroke="#ffa500" stroke-width="3.2"/></svg><svg style="left:429px;top:564px" width="98" height="22" viewBox="0 0 98 22"><path d="M0 11 L27 0.8 L27 7.6 L97 7.6 L97 14.6 L27 14.6 L27 21.5 Z" fill="#ffa500"/></svg><div style="left:384px;top:681px;width:85px;height:23px;background:#fff;border:1px solid #d9d9d9"></div><div class="t" style="left:389.2px;top:685.45px;font-size:15.3px;line-height:15.3px;color:#222;font-weight:400;letter-spacing:0px">Remove All</div><div style="left:0px;top:727px;width:1024px;height:41px;background:#443c48;"></div><div style="left:0px;top:727px;width:1px;height:41px;background:#000;"></div><div style="left:76px;top:727px;width:1px;height:40px;background:#000;"></div><div class="t" style="left:14.8px;top:742.74px;font-size:12px;line-height:12px;color:#fff;font-weight:400;letter-spacing:-0.25px">Keyboard</div><svg style="left:0px;top:0px" width="1024" height="768"><rect x="293.25" y="0.9" width="71.6" height="40" fill="none" stroke="#ffa500" stroke-width="3.7"/></svg><svg style="left:367px;top:12px" width="98" height="21" viewBox="0 0 98 21"><path d="M0 10 L27 0.5 L27 6.5 L97 6.5 L97 13.3 L27 13.3 L27 19.8 Z" fill="#ffa500"/></svg>
</body></html>
